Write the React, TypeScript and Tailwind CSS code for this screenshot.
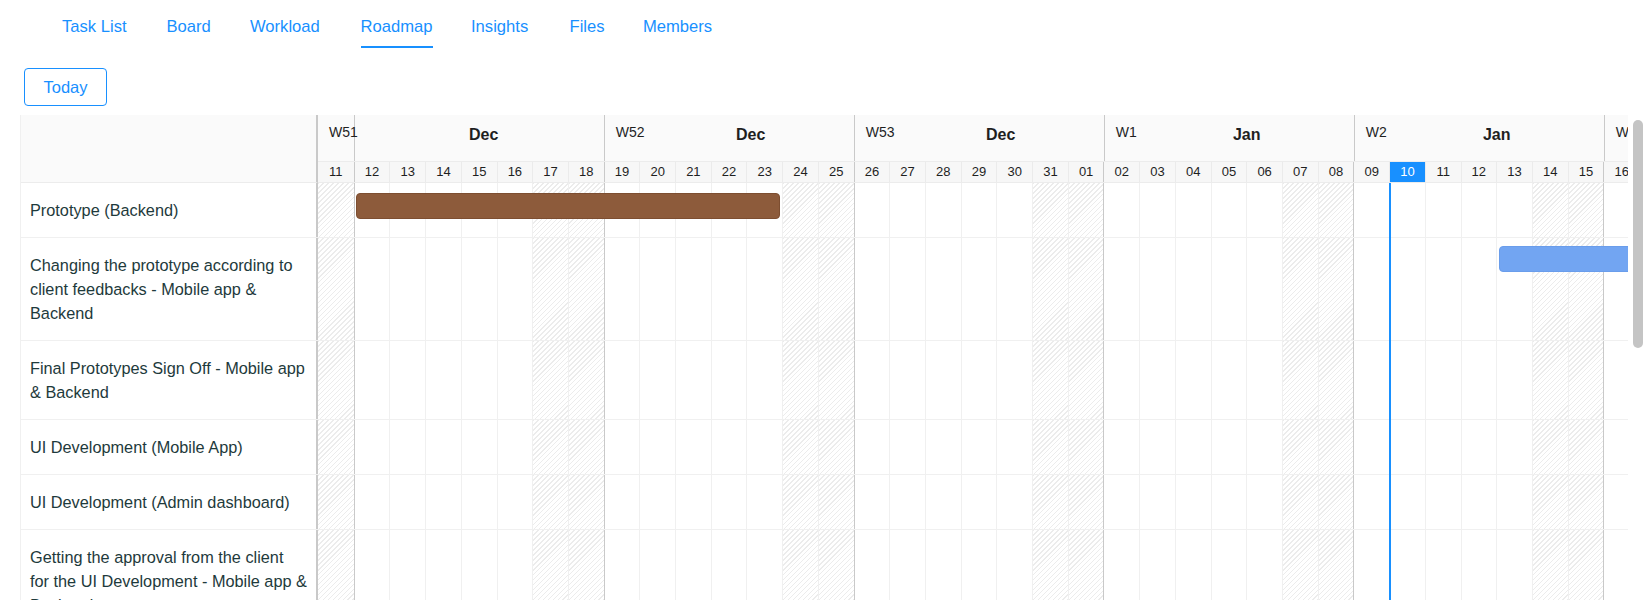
import React from 'react';

const DAY = 35.714;

interface Task {
  id: number;
  lines: string[];
  bar?: { start: number; span: number; className: string; top: number };
}

const tabs = [
  { label: 'Task List', w: 'w-[66px]' },
  { label: 'Board', w: 'w-[45px]' },
  { label: 'Workload', w: 'w-[72px]' },
  { label: 'Roadmap', w: 'w-[72px]' },
  { label: 'Insights', w: 'w-[60px]' },
  { label: 'Files', w: 'w-[35px]' },
  { label: 'Members', w: 'w-[72px]' },
];

// 37 days starting Sunday Dec 11
const days = Array.from({ length: 37 }).map((_, i) => {
  const label = i <= 20 ? String(11 + i) : String(i - 20).padStart(2, '0');
  return {
    idx: i,
    label,
    weekend: i % 7 === 0 || i % 7 === 6,
    monday: i % 7 === 1,
    today: i === 30,
  };
});

const weeks = [
  { w: '', month: 'Dec' },
  { w: 'W52', month: 'Dec' },
  { w: 'W53', month: 'Dec' },
  { w: 'W1', month: 'Jan' },
  { w: 'W2', month: 'Jan' },
  { w: 'W3', month: 'Jan' },
];

const tasks: Task[] = [
  {
    id: 1,
    lines: ['Prototype (Backend)'],
    bar: { start: 1, span: 12, className: 'bg-[#8d5b3b] border border-[#7d4e31]', top: 10 },
  },
  {
    id: 2,
    lines: ['Changing the prototype according to', 'client feedbacks - Mobile app &', 'Backend'],
    bar: { start: 33, span: 6, className: 'bg-[#72a5f2] border border-[#6a9deb]', top: 8 },
  },
  { id: 3, lines: ['Final Prototypes Sign Off - Mobile app', '& Backend'] },
  { id: 4, lines: ['UI Development (Mobile App)'] },
  { id: 5, lines: ['UI Development (Admin dashboard)'] },
  { id: 6, lines: ['Getting the approval from the client', 'for the UI Development - Mobile app &', 'Backend'] },
];

function DayCell({ day, header }: { day: (typeof days)[number]; header?: boolean }) {
  const border =
    day.idx === 0 ? '' : day.monday ? 'border-l border-[#c9c9c9]' : header ? 'border-l border-[#ebebeb]' : 'border-l border-[#f0f0f0]';

  if (header) {
    return (
      <div
        className={`w-[35.714px] shrink-0 flex items-center justify-center text-[13px] font-medium ${border} ${
          day.today ? 'bg-[#1890ff] text-white' : 'text-[#1f1f1f]'
        }`}
      >
        {day.label}
      </div>
    );
  }

  return (
    <div
      className={`w-[35.714px] shrink-0 ${border} ${
        day.weekend
          ? 'bg-[repeating-linear-gradient(135deg,#ececec_0px,#ececec_1px,#ffffff_1px,#ffffff_3.5px)]'
          : ''
      }`}
    />
  );
}

export default function App() {
  return (
    <div className="relative h-[600px] w-[1652px] overflow-hidden bg-white font-['Liberation_Sans',Arial,sans-serif]">
      {/* Tabs */}
      <div className="flex h-[48px] gap-[38.5px] pl-[62px]">
        {tabs.map((t) => (
          <div
            key={t.label}
            className={`relative shrink-0 whitespace-nowrap pt-[15px] text-[16.6px] leading-[24px] text-[#1890ff] ${t.w}`}
          >
            {t.label}
            {t.label === 'Roadmap' && <div className="absolute bottom-0 left-0 right-0 h-[2px] bg-[#1890ff]" />}
          </div>
        ))}
      </div>

      <div className="ml-[24px] mt-[20px]">
        <button className="h-[38px] w-[83px] rounded-[4px] border border-[#1890ff] text-[16.5px] text-[#1890ff]">
          Today
        </button>
      </div>

      {/* Gantt */}
      <div className="ml-[20px] mt-[9px] w-[1608px] overflow-hidden border-l border-[#f0f0f0]">
        {/* header */}
        <div className="flex">
          <div className="w-[297px] shrink-0 border-r-2 border-b border-[#c9c9c9] border-b-[#ececec] bg-[#fafafa]" />
          <div className="flex flex-col">
            <div className="flex h-[47px] border-b border-[#ececec] bg-[#fafafa] text-[#1f1f1f]">
              <div className="relative w-[35.714px] shrink-0">
                <span className="absolute left-[11px] top-[9px] whitespace-nowrap text-[14px] leading-[16px]">W51</span>
              </div>
              {weeks.map((wk, i) => (
                <div key={i} className="flex w-[250px] shrink-0 items-start border-l border-[#c9c9c9] pl-[6px]">
                  {wk.w && <span className="ml-[5px] mt-[9px] text-[14px] leading-[16px]">{wk.w}</span>}
                  <span className="ml-[3px] mt-[10px] flex-1 text-center text-[16px] font-semibold leading-[20px]">
                    {wk.month}
                  </span>
                </div>
              ))}
            </div>
            <div className="flex h-[21px] border-b border-[#ececec] bg-[#f7f7f7]">
              {days.map((d) => (
                <DayCell key={d.idx} day={d} header />
              ))}
            </div>
          </div>
        </div>

        {/* body */}
        <div className="relative">
          {tasks.map((task) => (
            <div key={task.id} className="flex border-b border-[#f0f0f0]">
              <div className="w-[297px] shrink-0 border-r-2 border-[#c9c9c9] py-[15px] pl-[9px] text-[16.3px] leading-[24px] text-[#1e3a3c]">
                {task.lines.map((l, i) => (
                  <div key={i} className="whitespace-nowrap">
                    {l}
                  </div>
                ))}
              </div>
              <div className="relative flex">
                {days.map((d) => (
                  <DayCell key={d.idx} day={d} />
                ))}
                {task.bar && (
                  <div
                    className={`absolute h-[26px] rounded-[4px] ${task.bar.className}`}
                    style={{
                      left: task.bar.start * DAY + 2,
                      width: task.bar.span * DAY - 4,
                      top: task.bar.top,
                    }}
                  />
                )}
              </div>
            </div>
          ))}
          <div className="absolute bottom-0 top-0 left-[1368px] w-[2px] bg-[#1890ff]" />
        </div>
      </div>

      {/* scrollbar thumb */}
      <div className="absolute left-[1633px] top-[120px] h-[228px] w-[10px] rounded-full bg-[#c4c4c4]" />
    </div>
  );
}
